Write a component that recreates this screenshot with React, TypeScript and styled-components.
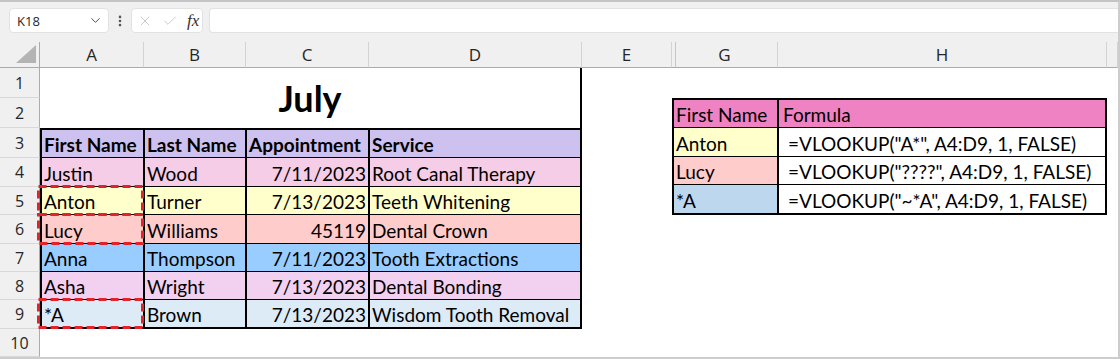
import React from 'react'
import styled, { createGlobalStyle } from 'styled-components'
import { Check, ChevronDown, EllipsisVertical, X } from 'lucide-react'

type Row = {
  first: string
  last: string
  date: string
  service: string
  bg: string
  marked?: boolean
}

const rows: Row[] = [
  { first: 'Justin', last: 'Wood', date: '7/11/2023', service: 'Root Canal Therapy', bg: '#f6cde6' },
  { first: 'Anton', last: 'Turner', date: '7/13/2023', service: 'Teeth Whitening', bg: '#ffffcc', marked: true },
  { first: 'Lucy', last: 'Williams', date: '45119', service: 'Dental Crown', bg: '#ffcccc', marked: true },
  { first: 'Anna', last: 'Thompson', date: '7/11/2023', service: 'Tooth Extractions', bg: '#99ccff' },
  { first: 'Asha', last: 'Wright', date: '7/13/2023', service: 'Dental Bonding', bg: '#f2d0f0' },
  { first: '*A', last: 'Brown', date: '7/13/2023', service: 'Wisdom Tooth Removal', bg: '#ddebf7', marked: true },
]

const lookups = [
  { name: 'Anton', bg: '#ffffcc', formula: '=VLOOKUP("A*", A4:D9, 1, FALSE)' },
  { name: 'Lucy', bg: '#ffcccc', formula: '=VLOOKUP("????", A4:D9, 1, FALSE)' },
  { name: '*A', bg: '#bdd7ee', formula: '=VLOOKUP("~*A", A4:D9, 1, FALSE)' },
]

const columns = ['A', 'B', 'C', 'D', 'E', 'G', 'H', '']

const GlobalStyle = createGlobalStyle`
  html, body {
    margin: 0;
    padding: 0;
    background: #fff;
  }
  body {
    width: 1120px;
    height: 359px;
    overflow: hidden;
  }
  * {
    box-sizing: border-box;
  }
`

const Window = styled.div`
  width: 1120px;
  height: 359px;
  display: flex;
  flex-direction: column;
  border-top: 2px solid #c4c4c4;
  border-right: 2px solid #cdcdcd;
  border-bottom: 2px solid #cdcdcd;
  overflow: hidden;
  font-family: 'Lato', 'Liberation Sans', sans-serif;
`

const FormulaBar = styled.div`
  height: 40px;
  display: flex;
  align-items: flex-start;
  padding: 6px 0 0 9px;
  background: #f0f0f0;
  font-family: 'Open Sans', 'Liberation Sans', sans-serif;
`

const NameBox = styled.div`
  width: 100px;
  height: 25px;
  display: flex;
  align-items: center;
  justify-content: space-between;
  padding: 0 5px 0 7px;
  background: #fff;
  border: 1px solid #e2e2e2;
  border-radius: 4px;
  font-size: 13px;
  color: #262626;
`

const Dots = styled.div`
  width: 22px;
  height: 25px;
  display: flex;
  align-items: center;
  justify-content: center;
  color: #555;
`

const FxBox = styled.div`
  width: 72px;
  height: 25px;
  display: flex;
  align-items: center;
  gap: 9px;
  padding-left: 5px;
  background: #fff;
  border: 1px solid #e2e2e2;
  border-radius: 4px;
  color: #bdbdbd;
`

const Fx = styled.span`
  font-family: 'Liberation Serif', serif;
  font-style: italic;
  font-size: 17px;
  color: #333;
`

const Input = styled.div`
  flex: 1;
  height: 25px;
  margin-left: 6px;
  background: #fff;
  border: 1px solid #e2e2e2;
  border-right: none;
  border-radius: 4px 0 0 4px;
`

const Sheet = styled.div`
  display: grid;
  grid-template-columns: 40px 104px 102px 123px 213px 90px 106px 329px 1fr;
  grid-template-rows: 26px 30px 30px 30px 29px 28px 29px 28px 28px 29px 28px;
  background: #fff;
`

const Corner = styled.div`
  grid-column: 1;
  grid-row: 1;
  background: #f0f0f0;
  border-right: 1px solid #ababab;
  border-bottom: 1px solid #ababab;
`

const ColHead = styled.div<{ $split?: boolean }>`
  grid-row: 1;
  display: flex;
  align-items: center;
  justify-content: center;
  background: #f0f0f0;
  border-right: 1px solid #d3d3d3;
  border-bottom: 1px solid #ababab;
  box-shadow: ${(p) => (p.$split ? 'inset 3px 0 0 #f0f0f0, inset 4px 0 0 #c6c6c6' : 'none')};
  font-family: 'Open Sans', 'Liberation Sans', sans-serif;
  font-size: 17px;
  color: #262626;
`

const RowHead = styled.div`
  grid-column: 1;
  display: flex;
  align-items: center;
  justify-content: center;
  background: #f0f0f0;
  border-right: 1px solid #ababab;
  border-bottom: 1px solid #d8d8d8;
  font-family: 'Open Sans', 'Liberation Sans', sans-serif;
  font-size: 16px;
  color: #262626;
`

const Title = styled.div`
  grid-column: 2 / 6;
  grid-row: 2 / 4;
  display: flex;
  align-items: center;
  justify-content: center;
  border-right: 2px solid #000;
  font-size: 36px;
  font-weight: 700;
  color: #000;
`

const Table = styled.div<{ $cols: string; $rows: string; $area: string }>`
  grid-area: ${(p) => p.$area};
  display: grid;
  grid-template-columns: ${(p) => p.$cols};
  grid-template-rows: ${(p) => p.$rows};
  column-gap: 2px;
  row-gap: 1px;
  background: #000;
  border: 2px solid #000;
`

const Cell = styled.div<{ $bg: string; $right?: boolean; $bold?: boolean; $indent?: number }>`
  position: relative;
  display: flex;
  align-items: flex-end;
  justify-content: ${(p) => (p.$right ? 'flex-end' : 'flex-start')};
  padding: 0 2px 1px ${(p) => p.$indent ?? 2}px;
  background: ${(p) => p.$bg};
  font-size: 19px;
  line-height: 23px;
  font-weight: ${(p) => (p.$bold ? 700 : 400)};
  color: #000;
  white-space: nowrap;
`

// red "marching ants" frame that sits over a marked cell
const Marquee = styled.svg`
  position: absolute;
  top: -2px;
  left: -5px;
  width: calc(100% + 6px);
  height: calc(100% + 4px);
  z-index: 2;
  overflow: visible;
  pointer-events: none;

  rect {
    x: 1.5px;
    y: 1.5px;
    width: calc(100% - 3px);
    height: calc(100% - 3px);
    fill: none;
    stroke: #e2232a;
    stroke-width: 3;
    stroke-dasharray: 8 4;
  }
`

const App = (): JSX.Element => {
  return (
    <Window>
      <GlobalStyle />
      <FormulaBar>
        <NameBox>
          K18
          <ChevronDown size={15} strokeWidth={1.5} color="#444" />
        </NameBox>
        <Dots>
          <EllipsisVertical size={14} strokeWidth={2.5} />
        </Dots>
        <FxBox>
          <X size={16} strokeWidth={1.2} />
          <Check size={16} strokeWidth={1.2} />
          <Fx>fx</Fx>
        </FxBox>
        <Input />
      </FormulaBar>

      <Sheet>
        <Corner>
          <svg width="39" height="25" viewBox="0 0 39 25">
            <polygon points="16,21 36,3 36,21" fill="#b4b4b4" />
          </svg>
        </Corner>
        {columns.map((c, i) => (
          <ColHead key={c || 'end'} $split={c === 'G'} style={{ gridColumn: i + 2 }}>
            {c}
          </ColHead>
        ))}
        {Array.from({ length: 10 }, (_, i) => (
          <RowHead key={i} style={{ gridRow: i + 2 }}>
            {i + 1}
          </RowHead>
        ))}

        <Title>July</Title>

        <Table $area="4 / 2 / 11 / 6" $cols="101px 100px 121px 210px" $rows="27px 28px 27px 28px 27px 27px 27px">
          <Cell $bg="#cdc1f0" $bold>First Name</Cell>
          <Cell $bg="#cdc1f0" $bold>Last Name</Cell>
          <Cell $bg="#cdc1f0" $bold>Appointment</Cell>
          <Cell $bg="#cdc1f0" $bold>Service</Cell>
          {rows.map((r) => (
            <React.Fragment key={r.first}>
              <Cell $bg={r.bg}>
                {r.first}
                {r.marked && (
                  <Marquee>
                    <rect />
                  </Marquee>
                )}
              </Cell>
              <Cell $bg={r.bg}>{r.last}</Cell>
              <Cell $bg={r.bg} $right>{r.date}</Cell>
              <Cell $bg={r.bg}>{r.service}</Cell>
            </React.Fragment>
          ))}
        </Table>

        <Table $area="3 / 7 / 7 / 9" $cols="103px 326px" $rows="27px 28px 27px 28px">
          <Cell $bg="#ef82c2">First Name</Cell>
          <Cell $bg="#ef82c2" $indent={4}>Formula</Cell>
          {lookups.map((l) => (
            <React.Fragment key={l.name}>
              <Cell $bg={l.bg}>{l.name}</Cell>
              <Cell $bg="#fff" $indent={9}>{l.formula}</Cell>
            </React.Fragment>
          ))}
        </Table>
      </Sheet>
    </Window>
  )
}

export default App
